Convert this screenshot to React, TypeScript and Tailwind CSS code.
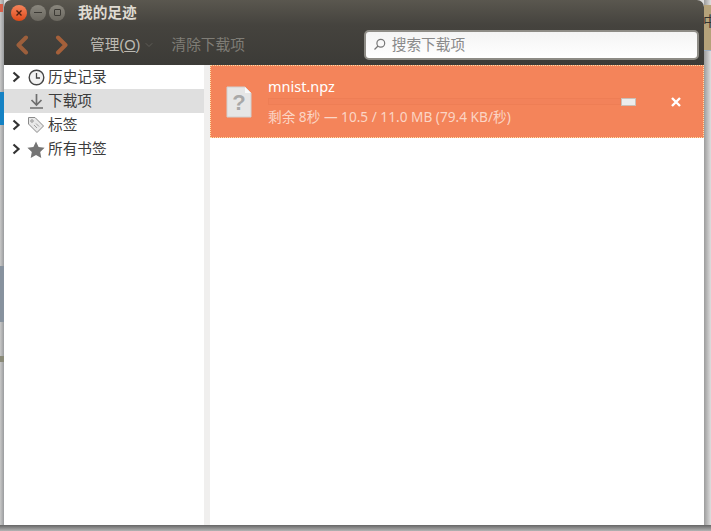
import React from "react";
import { ChevronDown } from "lucide-react";

const cjk = "font-['Liberation_Sans','Noto_Sans_CJK_SC',sans-serif]";

function Arrow() {
  return (
    <svg className="w-[10px] h-[12px] text-[#333]" viewBox="0 0 10 12" fill="none" stroke="currentColor" strokeWidth="2.2">
      <path d="M2.5 1.5 7.5 6 2.5 10.5" />
    </svg>
  );
}

function SidebarRow({ label, selected, arrow, icon }: { label: string; selected?: boolean; arrow?: boolean; icon: React.ReactNode }) {
  return (
    <div className={`h-6 flex items-center text-[14.67px] text-[#3c3c3c] ${selected ? "bg-[#dfdfdf]" : ""}`}>
      <div className="w-[22px] flex justify-center pl-[2px]">{arrow && <Arrow />}</div>
      <div className="w-[20px] h-[20px] flex items-center justify-center">{icon}</div>
      <span className="ml-[2px]">{label}</span>
    </div>
  );
}

export default function App() {
  return (
    <div className={`relative w-[711px] h-[531px] overflow-hidden bg-[#dcdcdc] ${cjk}`}>
      {/* desktop bits behind the window */}
      <div className="absolute left-0 top-0 w-[4px] h-[531px] bg-gradient-to-r from-[#c8c8c8] to-[#9a9c9e]" />
      <div className="absolute left-0 top-[4px] w-[3px] h-[8px] bg-[#d8604a]" />
      <div className="absolute left-0 top-[92px] w-[4px] h-[33px] bg-[#1582c4]" />
      <div className="absolute left-0 top-[266px] w-[4px] h-[56px] bg-[#87929e]" />
      <div className="absolute left-0 top-[356px] w-[4px] h-[6px] bg-[#8a8a78]" />
      <div className="absolute left-[704px] top-0 w-[7px] h-[531px] bg-gradient-to-r from-[#9c9c9c] to-[#dedede]" />
      <div className="absolute left-[704px] top-[5px] w-[7px] h-[45px] bg-[#b5a27a] overflow-hidden">
        <span className="absolute left-[-1px] top-[9px] text-[14px] leading-none text-[#333]">中</span>
      </div>
      <div className="absolute left-[704px] top-[50px] w-[7px] h-[1px] bg-[#9fb0c4]" />
      <div className="absolute left-0 top-[525px] w-[711px] h-[6px] bg-gradient-to-b from-[#666666] to-[#b4b4b4]" />

      {/* window */}
      <div className="relative ml-[4px] w-[700px] h-[525px] flex flex-col bg-white rounded-t-[7px] overflow-hidden">
        <div className="h-[25px] shrink-0 flex items-center bg-gradient-to-b from-[#5a574f] to-[#45433e]">
          <div className="w-[16px] h-[16px] ml-[7px] rounded-full bg-gradient-to-b from-[#f4845a] to-[#dd4814] flex items-center justify-center">
            <svg className="w-[8px] h-[8px]" viewBox="0 0 8 8" stroke="#4a2010" strokeWidth="1.4"><path d="M1.5 1.5 6.5 6.5M6.5 1.5 1.5 6.5" /></svg>
          </div>
          <div className="w-[16px] h-[16px] ml-[3px] rounded-full bg-gradient-to-b from-[#8a877e] to-[#6a675f] flex items-center justify-center">
            <div className="w-[8px] h-[1.5px] bg-[#3c3a35]" />
          </div>
          <div className="w-[16px] h-[16px] ml-[3px] rounded-full bg-gradient-to-b from-[#8a877e] to-[#6a675f] flex items-center justify-center">
            <div className="w-[7px] h-[7px] border border-[#3c3a35] rounded-[1px]" />
          </div>
          <span className="ml-[13px] text-[14.67px] font-bold text-[#dfdbd2]">我的足迹</span>
        </div>

        <div className="h-[40px] shrink-0 flex items-center bg-gradient-to-b from-[#45433e] to-[#3c3b37]">
          <svg className="w-[14px] h-[20px] ml-[11px]" viewBox="0 0 14 20" fill="none" stroke="#9c5f3c" strokeWidth="4" strokeLinecap="round" strokeLinejoin="round">
            <path d="M11 2.5 3.5 10 11 17.5" />
          </svg>
          <svg className="w-[14px] h-[20px] ml-[26px]" viewBox="0 0 14 20" fill="none" stroke="#a5603a" strokeWidth="4" strokeLinecap="round" strokeLinejoin="round">
            <path d="M3 2.5 10.5 10 3 17.5" />
          </svg>
          <span className="ml-[21px] text-[14.67px] text-[#bdbab2]">管理(<span className="underline">O</span>)</span>
          <ChevronDown className="w-[12px] h-[12px] ml-[2px] text-[#5f5d57]" />
          <span className="ml-[17px] text-[14.67px] text-[#7f7d76]">清除下载项</span>
          <div className="ml-[119px] w-[335px] h-[30px] mt-[-1px] rounded-[5px] border-2 border-[#8e8c86] bg-gradient-to-b from-[#f4f4f4] to-white flex items-center pl-[7px]">
            <svg className="w-[13px] h-[13px]" viewBox="0 0 13 13" fill="none" stroke="#777" strokeWidth="1.2"><circle cx="7.8" cy="5.2" r="3.9" /><path d="M5 8 1.5 11.5" /></svg>
            <span className="ml-[6px] text-[14.67px] text-[#8a8a8a]">搜索下载项</span>
          </div>
        </div>

        <div className="flex-1 flex min-h-0">
          <div className="w-[200px] shrink-0">
            <SidebarRow
              arrow
              label="历史记录"
              icon={
                <svg className="w-[17px] h-[17px]" viewBox="0 0 17 17" fill="none" stroke="#444">
                  <circle cx="8.5" cy="8.5" r="7.3" strokeWidth="1.4" fill="#f2f2f2" />
                  <path d="M8.5 4v5h3.5" strokeWidth="1.3" />
                </svg>
              }
            />
            <SidebarRow
              selected
              label="下载项"
              icon={
                <svg className="w-[15px] h-[16px]" viewBox="0 0 15 16" fill="none" stroke="#6e6e6e" strokeWidth="1.7">
                  <path d="M7.5 1v10M2.5 7l5 5 5-5M1 15h13" />
                </svg>
              }
            />
            <SidebarRow
              arrow
              label="标签"
              icon={
                <svg className="w-[18px] h-[18px]" viewBox="0 0 18 18" fill="#e8e8e8" stroke="#8a8a8a" strokeWidth="1">
                  <path d="M1.5 1.5h6.5l8.5 8.5-6.5 6.5L1.5 8z" />
                  <circle cx="5" cy="5" r="1.2" fill="#fff" />
                  <path d="M7 9l3 3M9 7.500l3 3" strokeWidth="0.8" />
                </svg>
              }
            />
            <SidebarRow
              arrow
              label="所有书签"
              icon={
                <svg className="w-[18px] h-[17px]" viewBox="0 0 18 17" fill="#757575">
                  <path d="M9 .5l2.6 5.5 6 .8-4.4 4.1 1.1 6-5.3-2.9-5.3 2.9 1.1-6L.4 6.8l6-.8z" />
                </svg>
              }
            />
          </div>
          <div className="w-[6px] shrink-0 bg-[#f0efee]" />
          <div className="flex-1 min-w-0">
            <div className="h-[73px] bg-[#f4845a] border border-dotted border-[#fde0a8] flex items-center text-white">
              <svg className="w-[26px] h-[32px] ml-[15px] shrink-0" viewBox="0 0 26 32">
                <path d="M1 1h18l6 6v24H1z" fill="#e6e6e6" stroke="#d0d0d0" />
                <path d="M19 1v6h6z" fill="#fafafa" />
                <text x="13" y="24" fontSize="22" fontWeight="700" textAnchor="middle" fill="#a8a8a8">?</text>
              </svg>
              <div className="ml-[16px] flex-1 min-w-0">
                <div className="text-[14.5px] leading-[18px] mt-[-1px] font-['Noto_Sans',sans-serif]">mnist.npz</div>
                <div className="flex items-center h-[8px] mt-[3px]">
                  <div className="h-[7px] w-[353px] bg-[#f2825a] border border-[#ee7e55]" />
                  <div className="w-[15px] h-[8px] bg-[#ececec] border border-[#c9c0b8]" />
                  <svg className="w-[10px] h-[10px] ml-[35px]" viewBox="0 0 10 10" stroke="#fff" strokeWidth="2.4"><path d="M1 1 9 9M9 1 1 9" /></svg>
                </div>
                <div className="text-[13.67px] leading-[18px] mt-[2px] text-[#fbd5c5] font-['Noto_Sans','Noto_Sans_CJK_SC',sans-serif]">剩余 8秒 — 10.5 / 11.0 MB (79.4 KB/秒)</div>
              </div>
            </div>
          </div>
        </div>
      </div>
    </div>
  );
}
